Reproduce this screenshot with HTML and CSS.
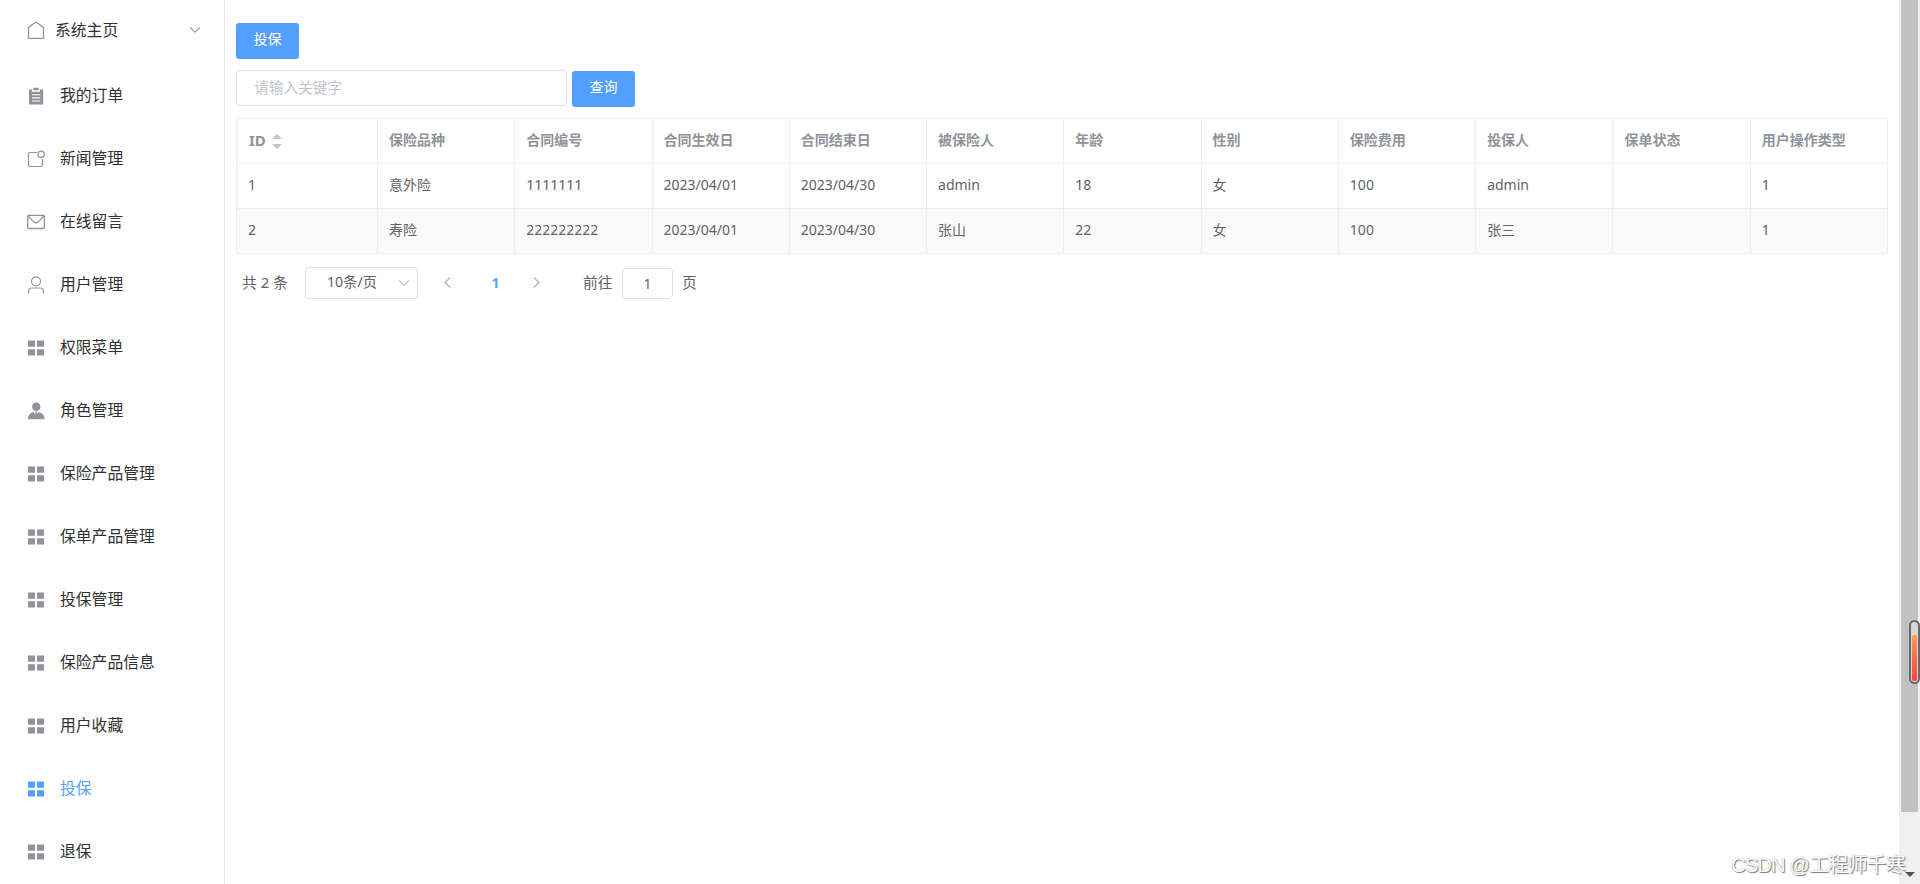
FILE: index.html
```html
<!DOCTYPE html>
<html lang="zh-CN">
<head>
    <meta charset="UTF-8">
    <meta name="viewport" content="width=device-width, initial-scale=1.0">
    <title>投保</title>
    <link rel="stylesheet" href="styles.css">
</head>
<body>
    <svg class="symbols" width="0" height="0">
        <symbol id="icon-home" viewBox="0 0 18 18"><path d="M1.5 17.3V6.4L9 .9l7.5 5.5v10.9z" fill="none" stroke="currentColor" stroke-width="1.2"/></symbol>
        <symbol id="icon-order" viewBox="0 0 18 18"><path d="M2 2.5h3v2.3h8V2.5h3.2v15H2z" fill="currentColor"/><path d="M6.3.8h5.4v2.4H6.3z" fill="currentColor"/><path d="M5 7.8h8.3M5 10.9h8.3M5 14h8.3" stroke="#fff" stroke-width="1.1"/></symbol>
        <symbol id="icon-news" viewBox="0 0 18 18"><path d="M10 2.5H3.2Q1.500 2.5 1.5 4.2v10.6Q1.5 16.5 3.2 16.5h10.6q1.7 0 1.7-1.7V9" fill="none" stroke="currentColor" stroke-width="1.2"/><circle cx="14.1" cy="4.3" r="3.2" fill="none" stroke="currentColor" stroke-width="1.3"/></symbol>
        <symbol id="icon-message" viewBox="0 0 18 18"><rect x=".7" y="2.3" width="16.7" height="13.2" rx="1" fill="none" stroke="currentColor" stroke-width="1.3"/><path d="M1.2 3l5.6 5.8q2.2 2 4.4 0L16.8 3" fill="none" stroke="currentColor" stroke-width="1.2"/></symbol>
        <symbol id="icon-user" viewBox="0 0 18 18"><circle cx="9" cy="5.3" r="4.5" fill="none" stroke="currentColor" stroke-width="1.2"/><path d="M1.5 17.5v-2Q1.5 12 5 12h8q3.5 0 3.5 3.5v2" fill="none" stroke="currentColor" stroke-width="1.2"/></symbol>
        <symbol id="icon-menu" viewBox="0 0 18 18"><path d="M1 1.5h7v6.3H1zM10 1.5h7v6.3h-7zM1 10.2h7v6.3H1zM10 10.2h7v6.3h-7z" fill="currentColor"/></symbol>
        <symbol id="icon-role" viewBox="0 0 18 18"><circle cx="9.3" cy="4.7" r="4.2" fill="currentColor"/><path d="M1 17.3q0-6 5.4-7.3L9 13.3 11.8 10q5.6 1.3 5.7 7.3z" fill="currentColor"/><path d="M8.2 9.6h2.2l-.5 1.5.5 1.5-1.2 1.2-1.1-1.2.6-1.5z" fill="currentColor"/></symbol>
        <symbol id="icon-arrow" viewBox="0 0 12 12"><path d="M1.2 3.5L6 8.3l4.8-4.8" fill="none" stroke="currentColor" stroke-width="1.1"/></symbol>
    </svg>
    <div class="layout">
        <div class="sidebar">
            <div class="submenu-title">
                <svg class="menu-icon"><use href="#icon-home"/></svg>
                <span>系统主页</span>
                <svg class="submenu-arrow"><use href="#icon-arrow"/></svg>
            </div>
            <ul class="menu">
                <li class="menu-item"><svg class="menu-icon"><use href="#icon-order"/></svg><span>我的订单</span></li>
                <li class="menu-item"><svg class="menu-icon"><use href="#icon-news"/></svg><span>新闻管理</span></li>
                <li class="menu-item"><svg class="menu-icon"><use href="#icon-message"/></svg><span>在线留言</span></li>
                <li class="menu-item"><svg class="menu-icon"><use href="#icon-user"/></svg><span>用户管理</span></li>
                <li class="menu-item"><svg class="menu-icon"><use href="#icon-menu"/></svg><span>权限菜单</span></li>
                <li class="menu-item"><svg class="menu-icon"><use href="#icon-role"/></svg><span>角色管理</span></li>
                <li class="menu-item"><svg class="menu-icon"><use href="#icon-menu"/></svg><span>保险产品管理</span></li>
                <li class="menu-item"><svg class="menu-icon"><use href="#icon-menu"/></svg><span>保单产品管理</span></li>
                <li class="menu-item"><svg class="menu-icon"><use href="#icon-menu"/></svg><span>投保管理</span></li>
                <li class="menu-item"><svg class="menu-icon"><use href="#icon-menu"/></svg><span>保险产品信息</span></li>
                <li class="menu-item"><svg class="menu-icon"><use href="#icon-menu"/></svg><span>用户收藏</span></li>
                <li class="menu-item active"><svg class="menu-icon"><use href="#icon-menu"/></svg><span>投保</span></li>
                <li class="menu-item"><svg class="menu-icon"><use href="#icon-menu"/></svg><span>退保</span></li>
            </ul>
        </div>

        <div class="main">
            <button class="btn">投保</button>
            <div class="search">
                <input class="search-input" type="text" placeholder="请输入关键字">
                <button class="btn">查询</button>
            </div>

            <table class="table">
                <thead>
                    <tr>
                        <th class="col-id"><span class="sortable">ID<span class="sort"></span></span></th>
                        <th>保险品种</th>
                        <th>合同编号</th>
                        <th>合同生效日</th>
                        <th>合同结束日</th>
                        <th>被保险人</th>
                        <th>年龄</th>
                        <th>性别</th>
                        <th>保险费用</th>
                        <th>投保人</th>
                        <th>保单状态</th>
                        <th>用户操作类型</th>
                    </tr>
                </thead>
                <tbody>
                    <tr>
                        <td>1</td>
                        <td>意外险</td>
                        <td>1111111</td>
                        <td>2023/04/01</td>
                        <td>2023/04/30</td>
                        <td>admin</td>
                        <td>18</td>
                        <td>女</td>
                        <td>100</td>
                        <td>admin</td>
                        <td></td>
                        <td>1</td>
                    </tr>
                    <tr>
                        <td>2</td>
                        <td>寿险</td>
                        <td>222222222</td>
                        <td>2023/04/01</td>
                        <td>2023/04/30</td>
                        <td>张山</td>
                        <td>22</td>
                        <td>女</td>
                        <td>100</td>
                        <td>张三</td>
                        <td></td>
                        <td>1</td>
                    </tr>
                </tbody>
            </table>

            <div class="pagination">
                <span class="total">共 2 条</span>
                <div class="page-size">
                    <span>10条/页</span>
                    <svg class="select-arrow"><use href="#icon-arrow"/></svg>
                </div>
                <svg class="page-arrow prev"><use href="#icon-arrow"/></svg>
                <span class="page-number">1</span>
                <svg class="page-arrow next"><use href="#icon-arrow"/></svg>
                <span class="jump">前往</span>
                <input class="jump-input" type="text" value="1">
                <span>页</span>
            </div>
        </div>

        <div class="scrollbar">
            <div class="scroll-thumb"></div>
            <div class="scroll-down"></div>
        </div>
    </div>

    <div class="gauge"><div class="gauge-value"></div></div>
    <div class="watermark">CSDN @工程师千寒</div>
</body>
</html>
```
FILE: styles.css
```css
* {
    box-sizing: border-box;
}
body {
    margin: 0;
    height: 884px;
    overflow: hidden;
    font-family: "Noto Sans", "Noto Sans CJK SC", sans-serif;
    font-size: 14px;
    color: #606266;
    background: #fff;
}
button,
input {
    font-family: inherit;
}
.symbols {
    display: block;
}
.layout {
    display: flex;
    height: 884px;
    overflow: hidden;
}

/* 左侧菜单 */
.sidebar {
    flex: none;
    width: 225px;
    border-right: 1px solid #e6e6e6;
    font-size: 15.8px;
    color: #303133;
}
.submenu-title {
    display: flex;
    align-items: center;
    height: 60px;
    padding: 0 23px 0 27px;
}
.submenu-title span {
    padding-bottom: 2px;
}
.submenu-title .menu-icon {
    margin: 0 10px 0 0;
}
.submenu-arrow {
    width: 12px;
    height: 12px;
    margin-left: auto;
    color: #909399;
}
.menu {
    margin: 0;
    padding: 3px 0 0;
    list-style: none;
}
.menu-item {
    display: flex;
    align-items: center;
    height: 63px;
    padding-left: 27px;
}
.menu-item span {
    padding-bottom: 1px;
}
.menu-icon {
    flex: none;
    width: 18px;
    height: 18px;
    margin: 3px 15px 0 0;
    color: #909399;
}
.active,
.active .menu-icon {
    color: #539fff;
}

/* 内容区 */
.main {
    flex: 1;
    padding: 23px 11px 0;
}
.btn {
    display: block;
    width: 63px;
    height: 36px;
    padding: 0 0 4px;
    border: none;
    border-radius: 3px;
    font-size: 14px;
    line-height: 20px;
    color: #fff;
    background: #539fff;
}
.search {
    display: flex;
    align-items: flex-end;
    gap: 5px;
    height: 37px;
    margin: 11px 0;
}
.search-input {
    width: 331px;
    height: 36px;
    margin-bottom: 1px;
    padding: 0 17px 2px;
    border: 1px solid #dcdfe6;
    border-radius: 4px;
    font-size: 14.7px;
}
.search-input::placeholder {
    color: #c0c4cc;
}
.table {
    width: 1652px;
    table-layout: fixed;
    border-collapse: collapse;
}
.table th,
.table td {
    height: 45px;
    padding: 0 11px 2px;
    border: 1px solid #ebeef5;
    font-size: 14px;
    line-height: 20px;
    text-align: left;
}
.table th {
    font-weight: bold;
    color: #909399;
}
.table .col-id {
    width: 141px;
    padding-left: 12px;
    font-size: 15px;
}
.table tbody tr:nth-child(2) {
    background: #fafafa;
}
.sortable {
    display: flex;
    align-items: center;
}
.sort {
    display: flex;
    flex-direction: column;
    gap: 5px;
    margin: 2px 0 0 6px;
}
.sort::before,
.sort::after {
    content: "";
    border: 5px solid transparent;
    border-top: none;
    border-bottom-color: #c0c4cc;
}
.sort::after {
    border-top: 5px solid #c0c4cc;
    border-bottom: none;
}

/* 分页 */
.pagination {
    display: flex;
    align-items: center;
    height: 32px;
    margin-top: 13px;
    padding-left: 6px;
    font-size: 14.8px;
    line-height: 20px;
}
.pagination span {
    padding-bottom: 2px;
}
.total {
    width: 63px;
}
.page-size {
    display: flex;
    align-items: center;
    width: 113px;
    height: 32px;
    padding: 0 7px 0 21px;
    border: 1px solid #dcdfe6;
    border-radius: 3px;
    font-size: 14.2px;
}
.select-arrow {
    width: 12px;
    height: 12px;
    margin-left: auto;
    color: #c0c4cc;
}
.page-arrow {
    width: 13px;
    height: 13px;
    margin-bottom: 2px;
    color: #a8abb2;
}
.prev {
    margin-left: 23px;
    transform: rotate(90deg);
}
.next {
    margin-left: -7px;
    transform: rotate(-90deg);
}
.pagination .page-number {
    width: 83px;
    padding: 0;
    font-size: 14px;
    font-weight: bold;
    text-align: center;
    color: #539fff;
}
.jump {
    width: 39px;
    margin-left: 40px;
}
.jump-input {
    width: 51px;
    height: 31px;
    margin: 1px 9px 0 0;
    padding: 0;
    border: 1px solid #dcdfe6;
    border-radius: 4px;
    font-size: 14px;
    text-align: center;
    color: #606266;
}

/* 滚动条 */
.scrollbar {
    display: flex;
    flex: none;
    flex-direction: column;
    justify-content: space-between;
    width: 21px;
    padding: 0 2px 7px;
    background: #f0f0f0;
}
.scroll-thumb {
    height: 812px;
    background: #c1c1c1;
}
.scroll-down {
    width: 0;
    margin-left: 4px;
    border: 5px solid transparent;
    border-top-color: #505050;
    border-bottom: none;
}
.gauge {
    position: absolute;
    top: 620px;
    right: 0;
    display: flex;
    align-items: flex-end;
    width: 11px;
    height: 64px;
    padding: 1px;
    border: 2px solid #696969;
    border-radius: 6px;
    background: #d8d8d8;
}
.gauge-value {
    width: 100%;
    height: 46px;
    border-radius: 2px;
    background: linear-gradient(#ff9d55, #ff3d3d);
}
.watermark {
    position: absolute;
    right: 15px;
    bottom: 4px;
    font-family: "Liberation Sans", "Noto Sans CJK SC", sans-serif;
    font-size: 20px;
    line-height: 30px;
    letter-spacing: -0.8px;
    color: #fff;
    text-shadow: 1px 1px 1px #777, 0 0 1px #999;
}
```
